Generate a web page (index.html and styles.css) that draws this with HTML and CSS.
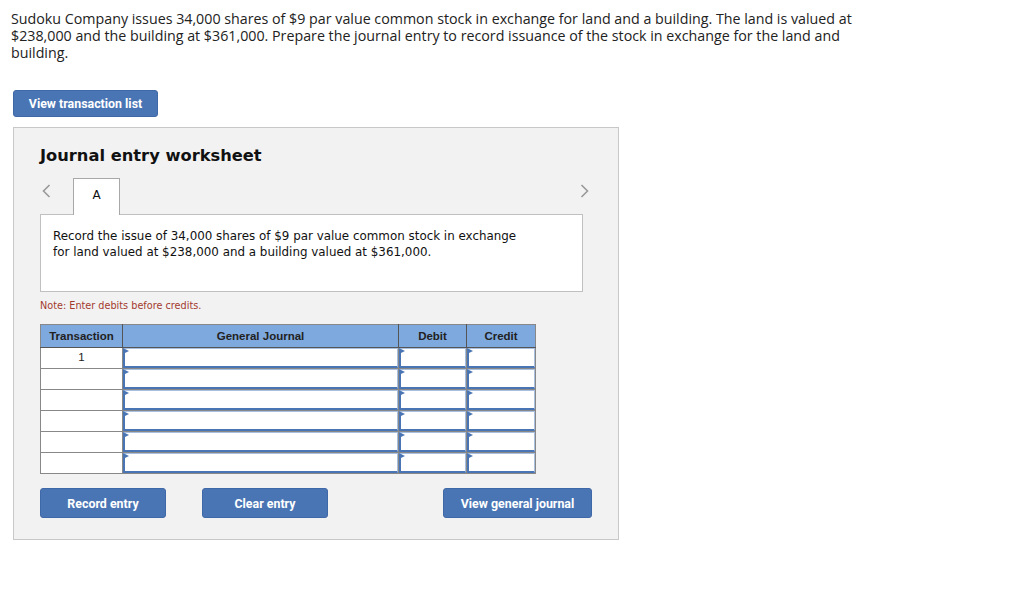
FILE: index.html
```html
<!DOCTYPE html>
<html>
<head>
<meta charset="utf-8">
<link rel="stylesheet" href="styles.css">
</head>
<body>
<div class="page">
  <p class="intro">Sudoku Company issues 34,000 shares of $9 par value common stock in exchange for land and a building. The land is valued at $238,000 and the building at $361,000. Prepare the journal entry to record issuance of the stock in exchange for the land and building.</p>
  <button class="btn btn-list">View transaction list</button>
  <div class="panel">
    <h2 class="title">Journal entry worksheet</h2>
    <div class="tabrow">
      <svg class="chev" width="9" height="14" viewBox="0 0 9 14"><path d="M7.5 1 L1.5 7 L7.5 13" fill="none" stroke="#999" stroke-width="1.6"/></svg>
      <div class="tab">A</div>
      <svg class="chev chev-r" width="9" height="14" viewBox="0 0 9 14"><path d="M1.5 1 L7.5 7 L1.5 13" fill="none" stroke="#999" stroke-width="1.6"/></svg>
    </div>
    <div class="desc">Record the issue of 34,000 shares of $9 par value common stock in exchange<br>for land valued at $238,000 and a building valued at $361,000.</div>
    <p class="note">Note: Enter debits before credits.</p>
    <table class="journal">
      <thead>
        <tr><th class="c-tr">Transaction</th><th class="c-gj">General Journal</th><th class="c-dr">Debit</th><th class="c-cr">Credit</th></tr>
      </thead>
      <tbody>
        <tr><td class="num">1</td><td><div class="inp"></div></td><td><div class="inp"></div></td><td><div class="inp"></div></td></tr>
        <tr><td class="num"></td><td><div class="inp"></div></td><td><div class="inp"></div></td><td><div class="inp"></div></td></tr>
        <tr><td class="num"></td><td><div class="inp"></div></td><td><div class="inp"></div></td><td><div class="inp"></div></td></tr>
        <tr><td class="num"></td><td><div class="inp"></div></td><td><div class="inp"></div></td><td><div class="inp"></div></td></tr>
        <tr><td class="num"></td><td><div class="inp"></div></td><td><div class="inp"></div></td><td><div class="inp"></div></td></tr>
        <tr><td class="num"></td><td><div class="inp"></div></td><td><div class="inp"></div></td><td><div class="inp"></div></td></tr>
      </tbody>
    </table>
    <div class="actions">
      <button class="btn btn-rec">Record entry</button>
      <button class="btn btn-clr">Clear entry</button>
      <button class="btn btn-gj">View general journal</button>
    </div>
  </div>
</div>
</body>
</html>
```

FILE: styles.css
```css
* { box-sizing: border-box; }
body { margin: 0; background: #fff; }
.page { padding: 10px 0 0 11px; }
.intro {
  margin: 0;
  width: 860px;
  font-family: "Open Sans", "Liberation Sans", sans-serif;
  font-size: 14.25px;
  line-height: 17px;
  color: #222;
}
.btn {
  background: #4a75b4;
  color: #fff;
  border: 1px solid #3f68a6;
  border-radius: 3px;
  font-family: Roboto, "Liberation Sans", sans-serif;
  font-weight: 700;
  font-size: 12.4px;
  padding: 0;
  cursor: pointer;
}
.btn-list { display: block; margin: 29px 0 0 2px; width: 145px; height: 27px; }
.panel {
  margin: 10px 0 0 2px;
  width: 606px;
  height: 413px;
  background: #f2f2f2;
  border: 1px solid #c8c8c8;
  padding: 0 0 0 26px;
}
.title {
  margin: 18px 0 0 0;
  font-family: "DejaVu Sans", Verdana, sans-serif;
  font-weight: 700;
  font-size: 16.3px;
  line-height: 20px;
  color: #111;
}
.tabrow {
  margin-top: 12px;
  width: 549px;
  height: 37px;
  display: flex;
  align-items: flex-start;
  position: relative;
  z-index: 1;
}
.chev { margin: 6px 0 0 2px; }
.chev-r { margin-left: auto; margin-right: 0; }
.tab {
  margin-left: 22px;
  width: 47px;
  height: 37px;
  background: #fff;
  border: 1px solid #a8a8a8;
  border-bottom: none;
  font-family: "DejaVu Sans", Verdana, sans-serif;
  font-size: 12px;
  text-align: center;
  line-height: 32px;
  color: #111;
}
.desc {
  margin-top: -1px;
  width: 543px;
  height: 78px;
  background: #fff;
  border: 1px solid #c0c0c0;
  padding: 13px 12px 0 12px;
  font-family: "DejaVu Sans", Verdana, sans-serif;
  font-size: 11.9px;
  line-height: 16px;
  color: #111;
}
.note {
  margin: 8px 0 0 0;
  font-family: "DejaVu Sans", Verdana, sans-serif;
  font-size: 9.7px;
  line-height: 12px;
  color: #a33a2e;
}
.journal {
  margin-top: 12px;
  border-collapse: collapse;
  width: 496px;
  table-layout: fixed;
  font-family: "Liberation Sans", Arial, sans-serif;
  font-size: 11.5px;
}
.journal th {
  background: #7ea9df;
  height: 23px;
  font-weight: 700;
  color: #222;
  border: 1px solid #555;
  border-top-color: #888;
  padding: 0;
}
.journal th:first-child { border-left-color: #888; }
.journal th:last-child { border-right-color: #888; }
.c-tr { width: 82px; }
.c-gj { width: 276px; }
.c-dr { width: 68px; }
.c-cr { width: 69px; }
.journal td {
  height: 21px;
  border: 1px solid #888;
  padding: 0;
  background: #fff;
}
.journal td.num { text-align: center; color: #222; vertical-align: top; line-height: 18px; }
.inp {
  position: relative;
  height: 20px;
  border-left: 2px solid #4a75b4;
  border-bottom: 2px solid #4a75b4;
  border-top: 1px solid #a9bfdf;
  border-right: 1px solid #a9bfdf;
  background: #fff;
}
.inp::before {
  content: "";
  position: absolute;
  left: 0;
  top: 0;
  border-left: 4px solid #4a75b4;
  border-top: 2.5px solid transparent;
  border-bottom: 2.5px solid transparent;
}
.actions {
  margin-top: 14px;
  display: flex;
  width: 552px;
}
.btn-rec, .btn-clr { width: 126px; height: 30px; }
.btn-clr { margin-left: 36px; }
.btn-gj { margin-left: auto; margin-right: 0; width: 149px; height: 30px; }
```
